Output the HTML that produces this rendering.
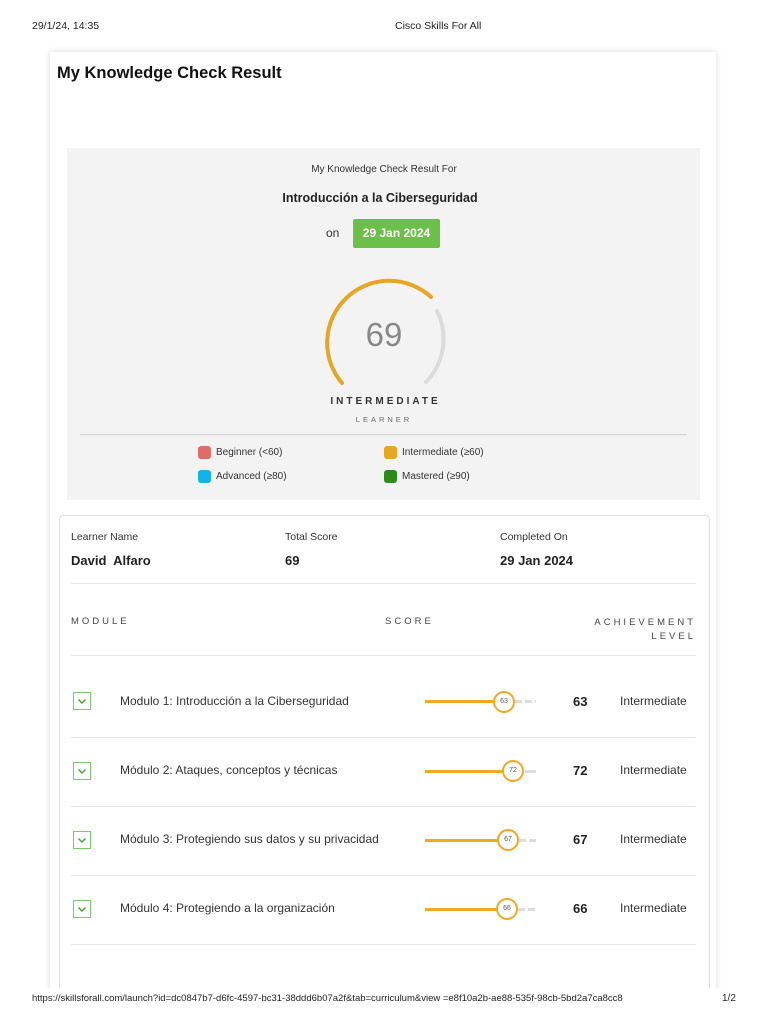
<!DOCTYPE html>
<html><head><meta charset="utf-8"><style>
html,body{margin:0;width:768px;height:1024px;overflow:hidden}
body{background:#fff;font-family:"Liberation Sans",sans-serif;position:relative;color:#222}
.a{position:absolute}
.hdr{font-size:10.5px;color:#222}
.card{left:50px;top:52px;width:666px;height:960px;background:#fff;box-shadow:0 0 6px rgba(0,0,0,.15)}
.gray{left:67px;top:148px;width:633px;height:352px;background:#f3f3f3}
.c{text-align:center;width:768px;left:0}
.sw{width:13px;height:13px;border-radius:3px;display:inline-block;vertical-align:middle;margin-right:5px}
.leg{font-size:10px;color:#333}
.inner{left:59px;top:515px;width:649px;height:475px;border:1px solid #ddd;border-bottom:none;border-radius:4px 4px 0 0}
.lbl{font-size:10.5px;color:#333}
.val{font-size:13px;font-weight:bold;color:#222}
.cap{font-size:9.5px;letter-spacing:3px;color:#444}
.chk{width:18px;height:18px;border:1px solid #7bc96f;box-sizing:border-box}
.mod{font-size:12px;color:#333}
.line{height:1px;background:#e3e6ea;left:71px;width:625px}
.dot{width:18px;height:18px;border:2px solid #f5a623;border-radius:50%;background:#fff;font-size:7px;text-align:center;line-height:18px;color:#555}
</style></head><body>
<div class="a hdr" style="left:32px;top:20px">29/1/24, 14:35</div>
<div class="a hdr" style="left:395px;top:20px">Cisco Skills For All</div>
<div class="a card"></div>
<div class="a" style="left:57px;top:64px;font-size:16.5px;font-weight:bold;color:#111">My Knowledge Check Result</div>
<div class="a gray"></div>
<div class="a c" style="top:164px;font-size:10px;color:#333">My Knowledge Check Result For</div>
<div class="a c" style="top:191px;font-size:12.5px;font-weight:bold;color:#222;padding-right:8px;box-sizing:border-box">Introducción a la Ciberseguridad</div>
<div class="a" style="left:326px;top:226px;font-size:12px;color:#333">on</div>
<div class="a" style="left:353px;top:219px;width:87px;height:29px;background:#6cc04a;color:#fff;font-size:12px;font-weight:bold;text-align:center;line-height:29px;border-radius:2px">29 Jan 2024</div>
<svg class="a" style="left:0;top:0" width="768" height="500">
<path d="M342 383 A62 62 0 0 1 431 297" fill="none" stroke="#e6a623" stroke-width="4" stroke-linecap="round"/>
<path d="M437 311 A62 62 0 0 1 426 382" fill="none" stroke="#dcdcdc" stroke-width="4" stroke-linecap="round"/>
</svg>
<div class="a c" style="top:316px;font-size:33px;color:#888">69</div>
<div class="a c" style="top:396px;font-size:10px;font-weight:bold;letter-spacing:3px;color:#333;padding-left:3px;box-sizing:border-box">INTERMEDIATE</div>
<div class="a c" style="top:415px;font-size:7.5px;letter-spacing:3px;color:#666">LEARNER</div>
<div class="a" style="left:80px;top:434px;width:607px;height:1px;background:#d0d0d0"></div>
<div class="a leg" style="left:198px;top:446px"><span class="sw" style="background:#e06b6b"></span>Beginner (&lt;60)</div>
<div class="a leg" style="left:384px;top:446px"><span class="sw" style="background:#e6a623"></span>Intermediate (≥60)</div>
<div class="a leg" style="left:198px;top:470px"><span class="sw" style="background:#10b4e6"></span>Advanced (≥80)</div>
<div class="a leg" style="left:384px;top:470px"><span class="sw" style="background:#2f8a1c"></span>Mastered (≥90)</div>
<div class="a inner"></div>
<div class="a lbl" style="left:71px;top:531px">Learner Name</div>
<div class="a lbl" style="left:285px;top:531px">Total Score</div>
<div class="a lbl" style="left:500px;top:531px">Completed On</div>
<div class="a val" style="left:71px;top:553px">David&nbsp; Alfaro</div>
<div class="a val" style="left:285px;top:553px">69</div>
<div class="a val" style="left:500px;top:553px">29 Jan 2024</div>
<div class="a line" style="top:583px"></div>
<div class="a cap" style="left:71px;top:616px">MODULE</div>
<div class="a cap" style="left:385px;top:616px">SCORE</div>
<div class="a cap" style="left:560px;top:616px;width:136px;text-align:right;line-height:14px">ACHIEVEMENT<br>LEVEL</div>
<div class="a line" style="top:655px"></div>

<div class="a chk" style="left:73px;top:692px"></div><svg class="a" style="left:73px;top:692px" width="18" height="18"><path d="M5.5 7.5 L9 11 L12.5 7.5" fill="none" stroke="#4aa83a" stroke-width="1.5"/></svg>
<div class="a mod" style="left:120px;top:694px">Modulo 1: Introducción a la Ciberseguridad</div>
<div class="a" style="left:425px;top:700px;width:70px;height:3px;background:#f5a623"></div>
<div class="a" style="left:515px;top:700px;width:21px;height:3px;background:repeating-linear-gradient(90deg,#ddd 0 7px,transparent 7px 10px)"></div>
<div class="a dot" style="left:493px;top:691px">63</div>
<div class="a val" style="left:573px;top:694px">63</div>
<div class="a mod" style="left:620px;top:694px">Intermediate</div>
<div class="a line" style="top:737px"></div>

<div class="a chk" style="left:73px;top:762px"></div><svg class="a" style="left:73px;top:762px" width="18" height="18"><path d="M5.5 7.5 L9 11 L12.5 7.5" fill="none" stroke="#4aa83a" stroke-width="1.5"/></svg>
<div class="a mod" style="left:120px;top:763px">Módulo 2: Ataques, conceptos y técnicas</div>
<div class="a" style="left:425px;top:770px;width:80px;height:3px;background:#f5a623"></div>
<div class="a" style="left:525px;top:770px;width:11px;height:3px;background:#ddd"></div>
<div class="a dot" style="left:502px;top:760px">72</div>
<div class="a val" style="left:573px;top:763px">72</div>
<div class="a mod" style="left:620px;top:763px">Intermediate</div>
<div class="a line" style="top:806px"></div>

<div class="a chk" style="left:73px;top:831px"></div><svg class="a" style="left:73px;top:831px" width="18" height="18"><path d="M5.5 7.5 L9 11 L12.5 7.5" fill="none" stroke="#4aa83a" stroke-width="1.5"/></svg>
<div class="a mod" style="left:120px;top:832px">Módulo 3: Protegiendo sus datos y su privacidad</div>
<div class="a" style="left:425px;top:839px;width:74px;height:3px;background:#f5a623"></div>
<div class="a" style="left:519px;top:839px;width:17px;height:3px;background:repeating-linear-gradient(90deg,#ddd 0 7px,transparent 7px 10px)"></div>
<div class="a dot" style="left:497px;top:829px">67</div>
<div class="a val" style="left:573px;top:832px">67</div>
<div class="a mod" style="left:620px;top:832px">Intermediate</div>
<div class="a line" style="top:875px"></div>

<div class="a chk" style="left:73px;top:900px"></div><svg class="a" style="left:73px;top:900px" width="18" height="18"><path d="M5.5 7.5 L9 11 L12.5 7.5" fill="none" stroke="#4aa83a" stroke-width="1.5"/></svg>
<div class="a mod" style="left:120px;top:901px">Módulo 4: Protegiendo a la organización</div>
<div class="a" style="left:425px;top:908px;width:73px;height:3px;background:#f5a623"></div>
<div class="a" style="left:518px;top:908px;width:18px;height:3px;background:repeating-linear-gradient(90deg,#ddd 0 7px,transparent 7px 10px)"></div>
<div class="a dot" style="left:496px;top:898px">66</div>
<div class="a val" style="left:573px;top:901px">66</div>
<div class="a mod" style="left:620px;top:901px">Intermediate</div>
<div class="a line" style="top:944px"></div>

<div class="a" style="left:0;top:988px;width:768px;height:36px;background:#fff"></div>
<div class="a hdr" style="left:32px;top:993px;font-size:9.5px">https://skillsforall.com/launch?id=dc0847b7-d6fc-4597-bc31-38ddd6b07a2f&amp;tab=curriculum&amp;view =e8f10a2b-ae88-535f-98cb-5bd2a7ca8cc8</div>
<div class="a hdr" style="left:722px;top:993px;font-size:10px">1/2</div>
</body></html>
